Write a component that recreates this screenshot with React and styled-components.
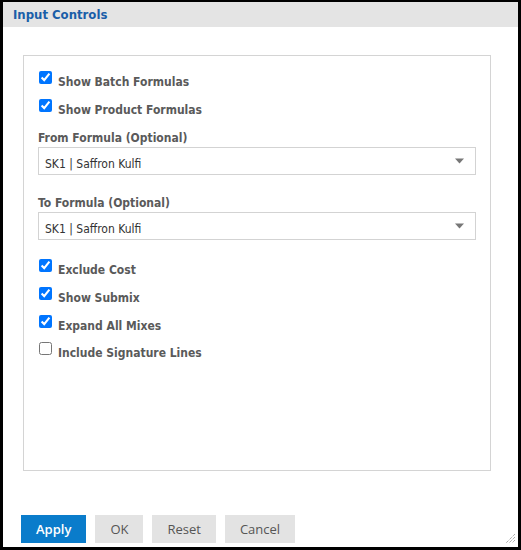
import React from "react";
import styled, { createGlobalStyle } from "styled-components";

const GlobalStyle = createGlobalStyle`
    html, body {
        margin: 0;
        padding: 0;
        background: #ffffff;
    }
    * {
        box-sizing: border-box;
    }
`;

const Window = styled.div`
    position: relative;
    display: flex;
    flex-direction: column;
    width: 521px;
    height: 550px;
    border: 3px solid #000;
    border-top-width: 2px;
    background: #fff;
    font-family: "DejaVu Sans", Verdana, sans-serif;
    font-stretch: condensed;
`;

const Header = styled.div`
    height: 25px;
    line-height: 25px;
    padding-left: 10px;
    background: #e4e4e4;
    color: #1a5ea8;
    font-size: 13px;
    font-weight: bold;
`;

const Body = styled.div`
    flex: 1;
    display: flex;
    flex-direction: column;
    padding: 28px 27px 0 20px;
`;

const Panel = styled.div`
    height: 416px;
    border: 1px solid #d4d4d4;
    padding: 15px 14px;
`;

const CheckList = styled.div`
    padding-top: ${p => p.$top || 0}px;
`;

const CheckRow = styled.label`
    display: flex;
    align-items: flex-start;
    height: ${p => p.$h || 28}px;
`;

const Box = styled.input`
    width: 13px;
    height: 13px;
    margin: 0 0 0 1px;
`;

const CheckText = styled.span`
    margin: 4px 0 0 6px;
    line-height: 14px;
    font-size: 12px;
    font-weight: bold;
    color: #5a5a5a;
`;

const Field = styled.div`
    padding-top: 4px;
    margin-bottom: 17px;
`;

const FieldLabel = styled.div`
    line-height: 14px;
    margin-bottom: 2px;
    font-size: 12px;
    font-weight: bold;
    color: #5a5a5a;
`;

const Select = styled.div`
    display: flex;
    align-items: center;
    justify-content: space-between;
    height: 28px;
    padding: 0 11px 0 6px;
    border: 1px solid #d3d3d3;
    background: #fff;
`;

const Value = styled.span`
    margin-top: 6px;
    line-height: 14px;
    font-size: 12px;
    color: #333;
`;

const Footer = styled.div`
    display: flex;
    gap: 9px;
    margin: 44px 0 0 -2px;
`;

const Button = styled.button`
    height: 28px;
    padding: 0 15px;
    border: none;
    border-radius: 0;
    background: ${p => (p.$primary ? "#0a7ccb" : "#e3e3e3")};
    color: ${p => (p.$primary ? "#fff" : "#555")};
    font-family: "Open Sans", "Noto Sans", sans-serif;
    font-size: 13px;
    font-weight: ${p => (p.$primary ? 600 : 400)};
    cursor: pointer;
`;

const Grip = styled.svg`
    position: absolute;
    right: 3px;
    bottom: 4px;
`;

function Arrow() {
    return (
        <svg width="9" height="6" viewBox="0 0 9 6">
            <polygon points="0,0.5 9,0.5 4.5,5.5" fill="#777" />
        </svg>
    );
}

const Check = ({ label, checked, h }) => (
    <CheckRow $h={h}>
        <Box type="checkbox" defaultChecked={checked} />
        <CheckText>{label}</CheckText>
    </CheckRow>
);

const Dropdown = ({ label, value }) => (
    <Field>
        <FieldLabel>{label}</FieldLabel>
        <Select>
            <Value>{value}</Value>
            <Arrow />
        </Select>
    </Field>
);

export default function App() {
    return (
        <>
            <GlobalStyle />
            <Window>
                <Header>Input Controls</Header>
                <Body>
                    <Panel>
                        <CheckList>
                            <Check label="Show Batch Formulas" checked />
                            <Check label="Show Product Formulas" checked />
                        </CheckList>
                        <Dropdown label="From Formula (Optional)" value="SK1 | Saffron Kulfi" />
                        <Dropdown label="To Formula (Optional)" value="SK1 | Saffron Kulfi" />
                        <CheckList $top={2}>
                            <Check label="Exclude Cost" checked />
                            <Check label="Show Submix" checked />
                            <Check label="Expand All Mixes" checked h={27} />
                            <Check label="Include Signature Lines" />
                        </CheckList>
                    </Panel>
                    <Footer>
                        <Button $primary>Apply</Button>
                        <Button>OK</Button>
                        <Button>Reset</Button>
                        <Button>Cancel</Button>
                    </Footer>
                </Body>
                <Grip width="9" height="9" viewBox="0 0 9 9">
                    <g stroke="#888" strokeWidth="1" strokeDasharray="1 1">
                        <line x1="9" y1="0" x2="0" y2="9" />
                        <line x1="9" y1="3" x2="3" y2="9" />
                        <line x1="9" y1="6" x2="6" y2="9" />
                    </g>
                </Grip>
            </Window>
        </>
    );
}
